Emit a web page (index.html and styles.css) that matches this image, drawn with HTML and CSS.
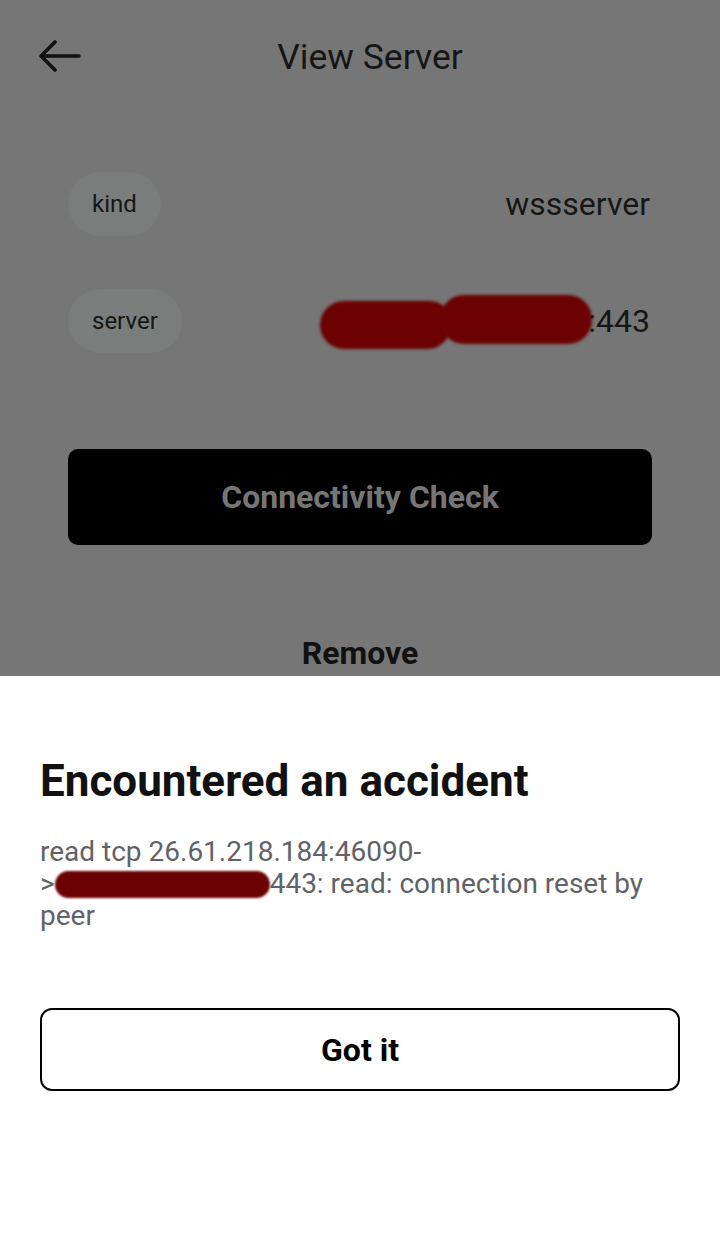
FILE: index.html
```html
<!DOCTYPE html>
<html>
<head>
<meta charset="utf-8">
<link rel="stylesheet" href="styles.css">
</head>
<body>
<div class="screen">
  <header class="topbar">
    <svg class="back" width="44" height="32" viewBox="0 0 44 32">
      <path d="M3 16 H41 M17 2 L3 16 L17 30" fill="none" stroke="#111" stroke-width="3.6" stroke-linecap="round" stroke-linejoin="round"/>
    </svg>
    <div class="title">View Server</div>
  </header>
  <div class="rows">
    <div class="row">
      <span class="chip">kind</span>
      <span class="value">wssserver</span>
    </div>
    <div class="row">
      <span class="chip">server</span>
      <span class="value"><span class="redact-wrap"><span class="blob b1"></span><span class="blob b2"></span></span>:443</span>
    </div>
  </div>
  <div class="check">Connectivity Check</div>
  <div class="remove">Remove</div>
</div>
<div class="sheet">
  <h1 class="sheet-title">Encountered an accident</h1>
  <p class="msg">read tcp 26.61.218.184:46090-<br>&gt;<span class="blob-inline"></span>443: read: connection reset by<br>peer</p>
  <div class="gotit">Got it</div>
</div>
</body>
</html>
```

FILE: styles.css
```css
* { box-sizing: border-box; }
html, body { margin: 0; padding: 0; }
body {
  width: 720px;
  height: 1236px;
  font-family: Roboto, "Noto Sans", sans-serif;
  background: #ffffff;
  overflow: hidden;
}
.screen {
  background: #767676;
  height: 676px;
  overflow: hidden;
  display: flex;
  flex-direction: column;
}
.topbar {
  position: relative;
  height: 114px;
  display: flex;
  align-items: center;
  justify-content: center;
}
.back {
  position: absolute;
  left: 38px;
  top: 40px;
}
.title {
  font-size: 35.5px;
  color: #161616;
  margin-left: 20px;
}
.rows {
  padding: 58px 70px 0 68px;
  display: flex;
  flex-direction: column;
  gap: 53px;
}
.row {
  display: flex;
  align-items: center;
  justify-content: space-between;
  height: 64px;
}
.chip {
  height: 64px;
  border-radius: 32px;
  background: #7a7d7c;
  padding: 0 24px;
  display: flex;
  align-items: center;
  font-size: 24px;
  color: #161616;
}
.value {
  font-size: 32px;
  color: #161616;
  display: flex;
  align-items: center;
}
.redact-wrap {
  position: relative;
  width: 272px;
  height: 56px;
  margin-right: -4px;
}
.blob {
  position: absolute;
  background: #6c0101;
  filter: blur(1.5px);
}
.b1 { left: 0; top: 8px; width: 130px; height: 48px; border-radius: 24px 20px 22px 24px; }
.b2 { left: 120px; top: 2px; width: 152px; height: 49px; border-radius: 24px; }
.check {
  margin: 96px 68px 0 68px;
  height: 96px;
  background: #000;
  border-radius: 10px;
  display: flex;
  align-items: center;
  justify-content: center;
  font-size: 32px;
  font-weight: 700;
  color: #767676;
}
.remove {
  margin-top: 90px;
  text-align: center;
  font-size: 32px;
  font-weight: 700;
  color: #111;
  line-height: 36px;
}
.sheet {
  padding: 79px 40px 0 40px;
}
.sheet-title {
  margin: 0;
  font-size: 44px;
  line-height: 52px;
  font-weight: 700;
  color: #111;
}
.msg {
  margin: 29px 0 0 0;
  font-size: 28px;
  line-height: 32px;
  color: #5f6368;
}
.blob-inline {
  display: inline-block;
  width: 215px;
  height: 27px;
  border-radius: 14px;
  background: #6c0101;
  vertical-align: -5px;
  filter: blur(1px);
}
.gotit {
  margin-top: 76px;
  height: 83px;
  border: 2px solid #000;
  border-radius: 12px;
  display: flex;
  align-items: center;
  justify-content: center;
  font-size: 32px;
  font-weight: 700;
  color: #000;
}
```
